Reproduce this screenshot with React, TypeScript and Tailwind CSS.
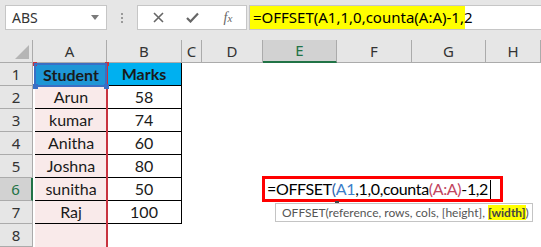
import React from 'react';

const cols = ['A', 'B', 'C', 'D', 'E', 'F', 'G', 'H'];

const students = [
  { name: 'Arun', marks: '58' },
  { name: 'kumar', marks: '74' },
  { name: 'Anitha', marks: '60' },
  { name: 'Joshna', marks: '80' },
  { name: 'sunitha', marks: '50' },
  { name: 'Raj', marks: '100' },
];

const uiFont = { fontFamily: '"Noto Sans", "Open Sans", sans-serif' };
const cellFont = { fontFamily: 'Lato, "Noto Sans", sans-serif' };

function FormulaBar() {
  return (
    <div className="flex h-[40px] items-start gap-0 pt-[5px] pl-[5px]">
      {/* Name box */}
      <div className="flex h-[25px] w-[102px] items-center justify-between border border-[#c6c6c6] bg-white pl-[6px] pr-[7px]">
        <span className="text-[14px] text-[#333]" style={uiFont}>ABS</span>
        <svg width="8" height="5" viewBox="0 0 8 5">
          <path d="M0 0 L8 0 L4 5 Z" fill="#7a7a7a" />
        </svg>
      </div>
      {/* dots */}
      <div className="flex w-[30px] flex-col items-center justify-center gap-[2px] pt-[8px]">
        <span className="h-[2px] w-[2px] bg-[#9a9a9a]" />
        <span className="h-[2px] w-[2px] bg-[#9a9a9a]" />
        <span className="h-[2px] w-[2px] bg-[#9a9a9a]" />
      </div>
      {/* buttons */}
      <div className="flex h-[25px] w-[110px] items-center border border-[#c6c6c6] bg-white">
        <div className="flex w-[37px] justify-center pl-[3px]">
          <svg width="11" height="11" viewBox="0 0 11 11">
            <path d="M1 1 L10 10 M10 1 L1 10" stroke="#666" strokeWidth="1.6" />
          </svg>
        </div>
        <div className="flex w-[35px] justify-center">
          <svg width="13" height="11" viewBox="0 0 13 11">
            <path d="M1 6 L4.5 9.5 L12 1.5" stroke="#666" strokeWidth="2.2" fill="none" />
          </svg>
        </div>
        <div className="flex w-[36px] justify-center">
          <span className="text-[14px] italic text-[#666]" style={{ fontFamily: '"Liberation Serif", serif' }}>
            f<span className="text-[11px]">x</span>
          </span>
        </div>
      </div>
      {/* formula input */}
      <div className="ml-[2px] flex h-[25px] flex-1 items-center border-y border-l border-[#c6c6c6] bg-white">
        <div className="flex h-full w-[215px] items-center bg-[#ffff00] pl-[3px]">
          <span className="text-[15px] text-black" style={uiFont}>=OFFSET(A1,1,0,counta(A:A)-1,2</span>
        </div>
      </div>
    </div>
  );
}

function Sheet() {
  return (
    <div className="relative">
      <div className="grid grid-cols-[33px_74px_75px_20px_61px_74px_75px_74px_1fr] grid-rows-[23px_repeat(8,23px)] bg-white">
        {/* corner */}
        <div className="relative border-r border-b border-[#ababab] bg-[#e6e6e6]">
          <svg className="absolute right-[3px] bottom-[3px]" width="14" height="14" viewBox="0 0 14 14">
            <path d="M14 0 L14 14 L0 14 Z" fill="#b5b5b5" />
          </svg>
        </div>
        {cols.map((c) =>
          c === 'E' ? (
            <div
              key={c}
              className="flex items-center justify-center border-r border-b-2 border-r-[#ababab] border-b-[#217346] bg-[#d2d2d2] text-[15px] text-[#217346]"
              style={uiFont}
            >
              {c}
            </div>
          ) : (
            <div
              key={c}
              className="flex items-center justify-center border-r border-b border-[#ababab] bg-[#e6e6e6] text-[15px] text-[#333]"
              style={uiFont}
            >
              {c}
            </div>
          )
        )}

        {/* row 1 */}
        <div className="flex items-center justify-center border-r border-b border-[#ababab] bg-[#e6e6e6] text-[15px] text-[#333]" style={uiFont}>1</div>
        <div className="ml-[2px] flex items-center justify-center bg-[#1e96d6] text-[16px] font-bold text-[#1a1a1a]" style={cellFont}>Student</div>
        <div className="flex items-center justify-center border-r border-b border-black bg-[#00b0f0] text-[16px] font-bold text-[#1a1a1a]" style={cellFont}>Marks</div>
        <div /><div /><div /><div /><div /><div />

        {students.map((s, i) => {
          const row = i + 2;
          const active = row === 6;
          return (
            <React.Fragment key={s.name}>
              {active ? (
                <div className="flex items-center justify-center border-r-2 border-b border-r-[#217346] border-b-[#ababab] bg-[#d2d2d2] text-[15px] text-[#217346]" style={uiFont}>{row}</div>
              ) : (
                <div className="flex items-center justify-center border-r border-b border-[#ababab] bg-[#e6e6e6] text-[15px] text-[#333]" style={uiFont}>{row}</div>
              )}
              <div className="ml-[2px] flex items-center justify-center border-b border-black bg-[#f9eaea] text-[16px] text-[#1a1a1a]" style={cellFont}>{s.name}</div>
              <div className="flex items-center justify-center border-r border-b border-black text-[16px] text-[#1a1a1a]" style={cellFont}>{s.marks}</div>
              <div /><div /><div /><div /><div /><div />
            </React.Fragment>
          );
        })}

        {/* row 8 */}
        <div className="flex items-center justify-center border-r border-b border-[#ababab] bg-[#e6e6e6] text-[15px] text-[#333]" style={uiFont}>8</div>
        <div className="ml-[2px] bg-[#f9eaea]" />
        <div /><div /><div /><div /><div /><div /><div />
      </div>

      {/* column A:A reference highlight */}
      <div className="absolute top-[23px] left-[106px] h-[190px] w-[2px] bg-[#c8333f]" />
      <div className="absolute top-[22px] left-[33px] h-[4px] w-[4px] bg-[#c8333f]" />
      <div className="absolute top-[22px] left-[105px] h-[4px] w-[4px] bg-[#c8333f]" />

      {/* A1 reference highlight */}
      <div className="absolute top-[23px] left-[34px] h-[24px] w-[73px] border-2 border-[#3a6fc4]" />
      <div className="absolute top-[44px] left-[33px] h-[5px] w-[5px] bg-[#3a6fc4]" />
      <div className="absolute top-[44px] left-[104px] h-[5px] w-[5px] bg-[#3a6fc4]" />

      {/* active cell editing */}
      <div className="absolute top-[136px] left-[262px] flex h-[26px] w-[241px] items-center border-[3px] border-[#ff0000] bg-white pl-[2px]">
        <span className="text-[16px] leading-none tracking-[-0.35px] whitespace-nowrap text-black" style={cellFont}>
          =OFFSET<span className="text-[#2c5fa8]">(</span>
          <span className="text-[#3b7ec8]">A1</span>,1,0,counta
          <span className="text-[#c2465f]">(A:A)</span>-1,2
        </span>
        <span className="ml-[2px] h-[19px] w-[1px] bg-black" />
      </div>
      <div className="absolute top-[161px] left-[335px] h-[3px] w-[4px] bg-[#444]" />

      {/* tooltip */}
      <div className="absolute top-[163px] left-[275px] flex h-[19px] w-[258px] items-center border border-[#c4c4c4] bg-white pl-[6px]">
        <span className="text-[12px] whitespace-nowrap text-[#555]" style={cellFont}>
          OFFSET(reference, rows, cols, [height],{' '}
          <span className="bg-[#ffff00] font-bold text-[#444]">[width]</span>)
        </span>
      </div>
    </div>
  );
}

export default function App() {
  return (
    <div className="h-[247px] w-[541px] overflow-hidden bg-[#e6e6e6]">
      <FormulaBar />
      <Sheet />
    </div>
  );
}
